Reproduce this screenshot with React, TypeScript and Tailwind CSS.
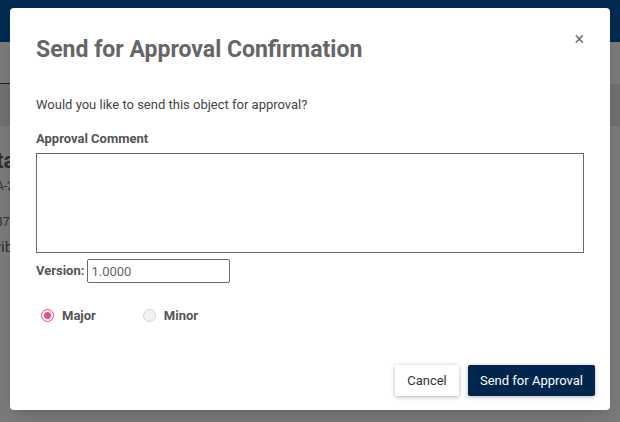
import React from "react";

function Radio({ checked, label }: { checked?: boolean; label: string }) {
  return (
    <label className="flex items-center gap-[8px]">
      <span
        className={`flex h-[13px] w-[13px] items-center justify-center rounded-full border ${
          checked ? "border-[#ee4a84] bg-white" : "border-[#d4d4d4] bg-[#f2f2f2]"
        }`}
      >
        {checked && <span className="h-[7px] w-[7px] rounded-full bg-[#ee4a84]" />}
      </span>
      <span className="text-[13px] font-bold text-[#555]">{label}</span>
    </label>
  );
}

export default function App() {
  return (
    <div className="relative h-[422px] w-[620px] overflow-hidden bg-[#7a7a7a] font-['Roboto',sans-serif]">
      {/* page behind the overlay */}
      <div className="h-[42px] bg-[#022a4f]" />
      <div className="h-[41px]" />
      <div className="h-[1px] w-[10px] bg-[#0a2a45]" />
      <div className="h-[42px] bg-[#6f6f6f] pl-[10px]" />
      <div className="-ml-[4px] flex flex-col gap-[4px] pt-[22px] text-[#2e2e2e]">
        <span className="text-[22px] font-bold leading-[26px]">ta</span>
        <span className="text-[12px] leading-[16px]">A-2</span>
        <span className="pt-[16px] text-[12px] leading-[16px]">37</span>
        <span className="pt-[4px] text-[15px] leading-[18px]">rib</span>
      </div>

      {/* modal */}
      <div className="absolute left-[10px] top-[8px] flex h-[402px] w-[600px] flex-col rounded-[4px] bg-white shadow-lg">
        <div className="relative px-[26px] pt-[28px]">
          <h2 className="text-[23px] font-bold leading-[28px] text-[#666]">
            Send for Approval Confirmation
          </h2>
          <button className="absolute right-[26px] top-[22px] text-[18px] leading-[18px] text-[#777]">
            ×
          </button>
        </div>
        <div className="px-[26px] pt-[32px]">
          <p className="text-[13px] leading-[18px] text-[#444]">
            Would you like to send this object for approval?
          </p>
          <div className="pt-[16px] text-[13px] font-bold leading-[18px] text-[#555]">
            Approval Comment
          </div>
          <textarea className="mt-[5px] block h-[100px] w-[548px] resize-none border border-[#6a6a6a] outline-none" />
          <div className="mt-[6px] flex items-center gap-[3px]">
            <span className="text-[13px] font-bold text-[#555]">Version:</span>
            <input
              defaultValue="1.0000"
              className="h-[24px] w-[143px] rounded-[2px] border border-[#6a6a6a] px-[3px] text-[13px] text-[#666] outline-none"
            />
          </div>
          <div className="mt-[23px] flex items-center gap-[47px] pl-[5px]">
            <Radio checked label="Major" />
            <Radio label="Minor" />
          </div>
        </div>
        <div className="mt-auto flex justify-end gap-[9px] pb-[14px] pr-[15px]">
          <button className="h-[31px] w-[64px] rounded-[2px] bg-white text-[13px] text-[#333] shadow-[0_1px_4px_rgba(0,0,0,0.3)]">
            Cancel
          </button>
          <button className="h-[31px] w-[127px] rounded-[2px] bg-[#00264d] text-[13px] text-white shadow-[0_1px_4px_rgba(0,0,0,0.3)]">
            Send for Approval
          </button>
        </div>
      </div>
    </div>
  );
}
